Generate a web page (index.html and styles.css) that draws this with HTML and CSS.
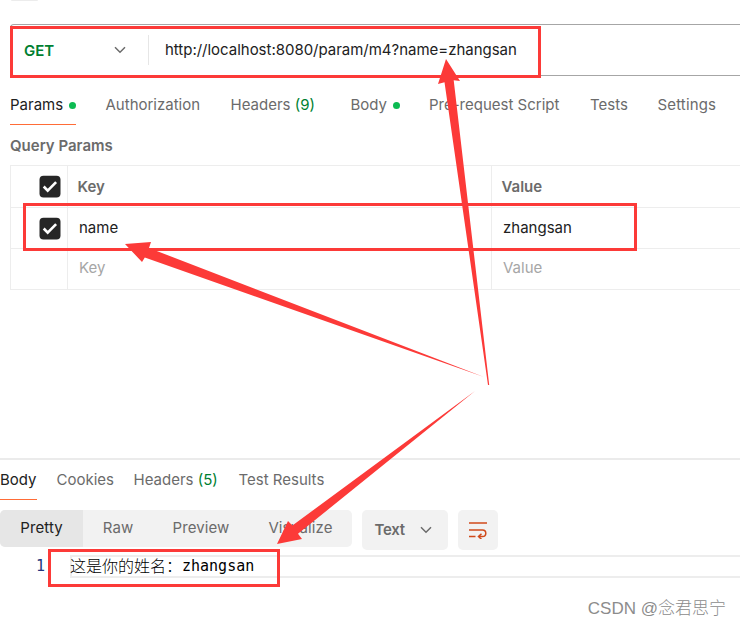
FILE: index.html
```html
<!DOCTYPE html>
<html lang="en">
<head>
<meta charset="utf-8">
<title>Request</title>
<link rel="stylesheet" href="styles.css">
</head>
<body>
<div class="app">
  <div class="stub"></div>
  <div class="url-bar">
    <div class="method"><b>GET</b>
      <svg width="14" height="10" viewBox="0 0 14 10"><path d="M2 2.2 7 7.2 12 2.2"/></svg>
    </div>
    <span class="url">http://localhost:8080/param/m4?name=zhangsan</span>
  </div>
  <nav class="tabs request-tabs">
    <div class="tab"><span class="active">Params<i class="dot"></i></span></div>
    <div class="tab"><span>Authorization</span></div>
    <div class="tab"><span>Headers <em>(9)</em></span></div>
    <div class="tab"><span>Body<i class="dot"></i></span></div>
    <div class="tab"><span>Pre-request Script</span></div>
    <div class="tab"><span>Tests</span></div>
    <div class="tab"><span>Settings</span></div>
  </nav>
  <h2 class="title">Query Params</h2>
  <div class="params">
    <div class="row head">
      <div class="cell check"><svg width="22" height="23" viewBox="0 0 22 23"><rect x=".5" y=".8" width="21" height="21.6" rx="4"/><path d="m4.7 11.5 4 4.2 8.4-8.6"/></svg></div>
      <div class="cell">Key</div><div class="cell">Value</div>
    </div>
    <div class="row">
      <div class="cell check"><svg width="22" height="23" viewBox="0 0 22 23"><rect x=".5" y=".8" width="21" height="21.6" rx="4"/><path d="m4.7 11.5 4 4.2 8.4-8.6"/></svg></div>
      <div class="cell">name</div><div class="cell">zhangsan</div>
    </div>
    <div class="row empty">
      <div class="cell check"></div>
      <div class="cell">Key</div><div class="cell">Value</div>
    </div>
  </div>
  <section class="response">
    <nav class="tabs response-tabs">
      <div class="tab"><span class="active">Body</span></div>
      <div class="tab"><span>Cookies</span></div>
      <div class="tab"><span>Headers <em>(5)</em></span></div>
      <div class="tab"><span>Test Results</span></div>
    </nav>
    <div class="toolbar">
      <div class="views"><span class="on">Pretty</span><span>Raw</span><span>Preview</span><span>Visualize</span></div>
      <div class="format"><b>Text</b><svg width="14" height="10" viewBox="0 0 14 10"><path d="M2 2.2 7 7.2 12 2.2"/></svg></div>
      <div class="wrap"><svg width="20" height="18" viewBox="0 0 20 18"><path d="M1 2h18"/><path d="M1 9h13.5a3.3 3.3 0 0 1 0 6.6H11M1 15.6h6.5"/><path d="m13.5 12.8-3 2.8 3 2.6"/></svg></div>
    </div>
    <div class="code"><span class="number">1</span><div class="line"><span class="han">这是你的姓名：</span><span>zhangsan</span></div></div>
  </section>
  <footer class="credit">CSDN @念君思宁</footer>
</div>
<svg class="marks" width="740" height="627" viewBox="0 0 740 627">
  <g class="boxes">
    <rect x="11.5" y="27.5" width="528" height="49"/>
    <rect x="24.5" y="204.5" width="611" height="45"/>
    <rect x="49.5" y="550.5" width="229" height="35"/>
  </g>
  <g class="arrows">
    <path d="M446 59 460 81 453.7 80.2 489.2 385H488L444.5 82.2 438 84Z"/>
    <path d="M125 244 151 242 149 248 484 377 144.8 257.5 142 262Z"/>
    <path d="M277 544 288 521 292.4 525.5 475 391 298 533.8 302 539Z"/>
  </g>
</svg>
</body>
</html>
```

FILE: styles.css
```css
* { box-sizing: border-box; }
body { margin: 0; background: #fff; color: #212121; font: 15px/20px Inter, "Noto Sans CJK SC", sans-serif; }
.app { width: 740px; height: 627px; overflow: hidden; display: flex; flex-direction: column; }
svg path { fill: none; stroke: #6b6b6b; stroke-width: 1.5; }
.stub { flex: none; width: 27px; height: 1px; margin: 0 0 23px 11px; background: #ececec; border-radius: 0 0 4px 4px; }
.url-bar { flex: none; height: 52px; margin-left: 10px; border: 1px solid #a6a6a6; border-right: 0; border-radius: 4px 0 0 4px; display: flex; align-items: center; }
.method { width: 138px; height: 30px; padding: 2px 21px 0 13px; border-right: 1px solid #e6e6e6; display: flex; align-items: center; justify-content: space-between; color: #007f31; }
.method b { font-weight: 600; }
.method svg { margin-bottom: 2px; }
.url { margin-left: 16px; letter-spacing: -.02px; }
.tabs { flex: none; display: grid; color: #6b6b6b; }
.tab span { display: inline-flex; align-items: center; height: 100%; white-space: pre; }
.tab .active { color: #212121; border-bottom: 1px solid #ff6c37; }
.tab em { color: #007f31; font-style: normal; }
.dot { width: 7px; height: 7px; margin-left: 6px; border-radius: 50%; background: #0cbb52; }
.request-tabs { height: 39px; margin: 10px 0 0 10px; grid-template-columns: 95.5px 125px 120px 78.5px 161px 67.5px auto; }
.request-tabs .tab { height: 39px; }
.request-tabs .tab span:not(.active) { padding-bottom: 1px; }
.request-tabs .tab:last-child { letter-spacing: .15px; }
.title { flex: none; margin: 11px 0 9px 10px; font-size: 15px; line-height: 20px; font-weight: 600; color: #6b6b6b; }
.params { flex: none; height: 125px; margin-left: 10px; border: 1px solid #ededed; border-right: 0; display: grid; grid-template-rows: 42px 41px 40px; }
.row { display: grid; grid-template-columns: 56px 424px 1fr; border-bottom: 1px solid #ededed; }
.row:last-child { border-bottom: 0; }
.cell { display: flex; align-items: center; padding-left: 11px; border-left: 1px solid #ededed; }
.cell.check { border-left: 0; padding-left: 28px; }
.check svg { flex: none; }
.head { font-weight: 600; color: #6b6b6b; }
.head .cell:not(.check) { padding-left: 9.5px; }
.empty { color: #a6a6a6; }
.empty .cell { padding-bottom: 3px; }
.check rect { fill: #262626; }
.check path { stroke: #fff; stroke-width: 2.6; }
.response { flex: none; margin-top: 168px; border-top: 2px solid #ebebeb; }
.response-tabs { height: 40px; grid-template-columns: 56.5px 77px 105px auto; }
.response-tabs .tab { height: 40px; }
.toolbar { display: flex; gap: 10px; margin-top: 10px; color: #6b6b6b; align-items: flex-start; }
.views { width: 352px; height: 37px; display: grid; grid-template-columns: 83px 70px 96px 103px; border-radius: 5px; overflow: hidden; background: #f2f2f2; letter-spacing: .1px; }
.views span { display: flex; align-items: center; justify-content: center; padding-bottom: 1px; }
.views .on { color: #212121; background: #e6e6e6; }
.format { width: 86px; height: 40px; padding: 0 15px 1px 12.5px; display: flex; align-items: center; justify-content: space-between; background: #f2f2f2; border-radius: 5px; letter-spacing: -.3px; }
.format b { font-weight: 600; }
.wrap { width: 40px; height: 40px; display: grid; place-items: center; background: #f2f2f2; border-radius: 5px; }
.wrap path { stroke: #d04a1b; }
.code { display: flex; margin-top: 5px; font: 15px/19px "DejaVu Sans Mono", "Noto Sans CJK SC", monospace; }
.number { width: 70px; padding: 2px 0 0 36px; color: #223680; }
.line { flex: 1; height: 23px; border: 2px solid #ededed; border-right: 0; display: flex; align-items: center; color: #000; }
.han { width: 112px; margin-left: -2px; padding-bottom: 2px; font: 300 16px/19px "Noto Sans CJK SC", sans-serif; white-space: nowrap; }
.credit { flex: none; margin: 21px 14px 0 0; text-align: right; font: 300 17px/20px "Liberation Sans", "Noto Sans CJK SC", sans-serif; color: #8c8c8c; }
.marks { position: absolute; left: 0; top: 0; }
.boxes rect { fill: none; stroke: #fc3a38; stroke-width: 3; }
.arrows path { fill: #fc3a38; stroke: none; }
```
